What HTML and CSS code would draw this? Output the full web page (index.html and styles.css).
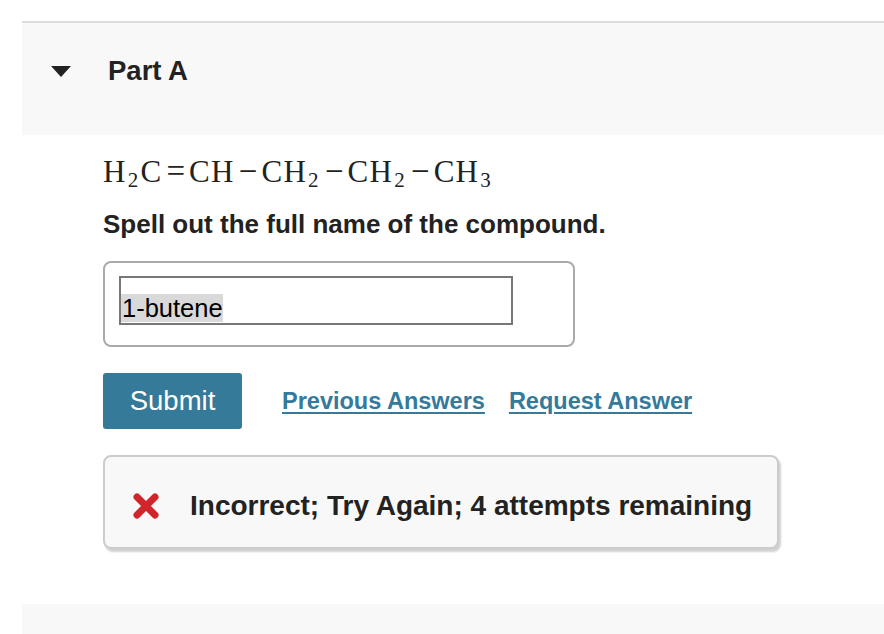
FILE: index.html
```html
<!DOCTYPE html>
<html>
<head>
<meta charset="utf-8">
<link rel="stylesheet" href="styles.css">
</head>
<body>
<div class="page">
  <div class="part-header">
    <span class="caret"></span>
    <h2 class="part-title">Part A</h2>
  </div>
  <div class="part-body">
    <div class="formula">H<sub>2</sub>C<span class="bond">=</span>CH<span class="bond">−</span>CH<sub>2</sub><span class="bond">−</span>CH<sub>2</sub><span class="bond">−</span>CH<sub>3</sub></div>
    <p class="prompt">Spell out the full name of the compound.</p>
    <div class="answer-box">
      <div class="answer-input"><span class="selected">1-butene</span></div>
    </div>
    <div class="actions">
      <button class="submit">Submit</button>
      <a class="link" href="#">Previous Answers</a>
      <a class="link" href="#">Request Answer</a>
    </div>
    <div class="feedback">
      <svg class="x-icon" viewBox="0 0 28 28" width="28" height="28">
        <path d="M5 5 L23 23 M23 5 L5 23" stroke="#d0262b" stroke-width="7" stroke-linecap="round"/>
      </svg>
      <span class="feedback-text">Incorrect; Try Again; 4 attempts remaining</span>
    </div>
  </div>
  <div class="next-part"></div>
</div>
</body>
</html>
```
FILE: styles.css
```css
html, body {
  margin: 0;
  padding: 0;
  background: #fff;
}
body {
  font-family: "Liberation Sans", Arial, sans-serif;
  color: #222;
}
.page {
  padding: 21px 0 0 22px;
  height: 613px;
  overflow: hidden;
}
.part-header {
  border-top: 2px solid #ddd;
  background: #f8f8f8;
  height: 114px;
  display: flex;
  align-items: center;
  padding-left: 29px;
  box-sizing: border-box;
  padding-bottom: 16px;
}
.caret {
  width: 0;
  height: 0;
  border-left: 10px solid transparent;
  border-right: 10px solid transparent;
  border-top: 11px solid #222;
  margin-right: 37px;
}
.part-title {
  margin: 0;
  font-size: 27.5px;
  font-weight: bold;
  color: #222;
}
.part-body {
  padding-left: 81px;
  padding-top: 21px;
}
.formula {
  font-family: "Liberation Serif", "Times New Roman", serif;
  font-size: 31px;
  line-height: 32px;
  letter-spacing: 1.3px;
  color: #222;
}
.formula sub {
  font-size: 21px;
  vertical-align: -5px;
  line-height: 0;
  padding: 0 1px;
}
.bond {
  font-size: 33px;
  line-height: 0;
  padding: 0 4px;
  letter-spacing: 0;
}
.prompt {
  margin: 21px 0 0 0;
  font-size: 26px;
  font-weight: bold;
  line-height: 30px;
}
.answer-box {
  margin-top: 22px;
  width: 472px;
  height: 86px;
  box-sizing: border-box;
  border: 2px solid #aaa;
  border-radius: 8px;
  padding: 13px 0 0 14px;
}
.answer-input {
  width: 394px;
  height: 49px;
  box-sizing: border-box;
  border: 2px solid #777;
  padding: 16px 0 0 0;
  font-size: 25.5px;
  line-height: 29px;
  color: #000;
}
.selected {
  background: #d9d9d9;
  padding-left: 1px;
}
.actions {
  margin-top: 26px;
  display: flex;
  align-items: center;
}
.submit {
  width: 139px;
  height: 56px;
  background: #367a99;
  color: #fff;
  border: none;
  border-radius: 3px;
  font-family: "Liberation Sans", Arial, sans-serif;
  font-size: 27.5px;
  margin-right: 40px;
  padding: 0;
}
.link {
  font-size: 23.5px;
  font-weight: bold;
  color: #337a9c;
  text-decoration: underline;
  text-underline-offset: 3px;
  margin-right: 24px;
}
.feedback {
  margin-top: 26px;
  width: 676px;
  height: 94px;
  box-sizing: border-box;
  border: 2px solid #ccc;
  border-radius: 8px;
  background: #f8f8f8;
  box-shadow: 2px 3px 2px rgba(0,0,0,0.18);
  display: flex;
  align-items: center;
  padding-left: 27px;
  padding-top: 8px;
}
.x-icon {
  margin-right: 30px;
  flex: none;
}
.feedback-text {
  font-size: 28px;
  font-weight: bold;
  color: #222;
}
.next-part {
  margin-top: 55px;
  height: 40px;
  background: #f8f8f8;
}
```
